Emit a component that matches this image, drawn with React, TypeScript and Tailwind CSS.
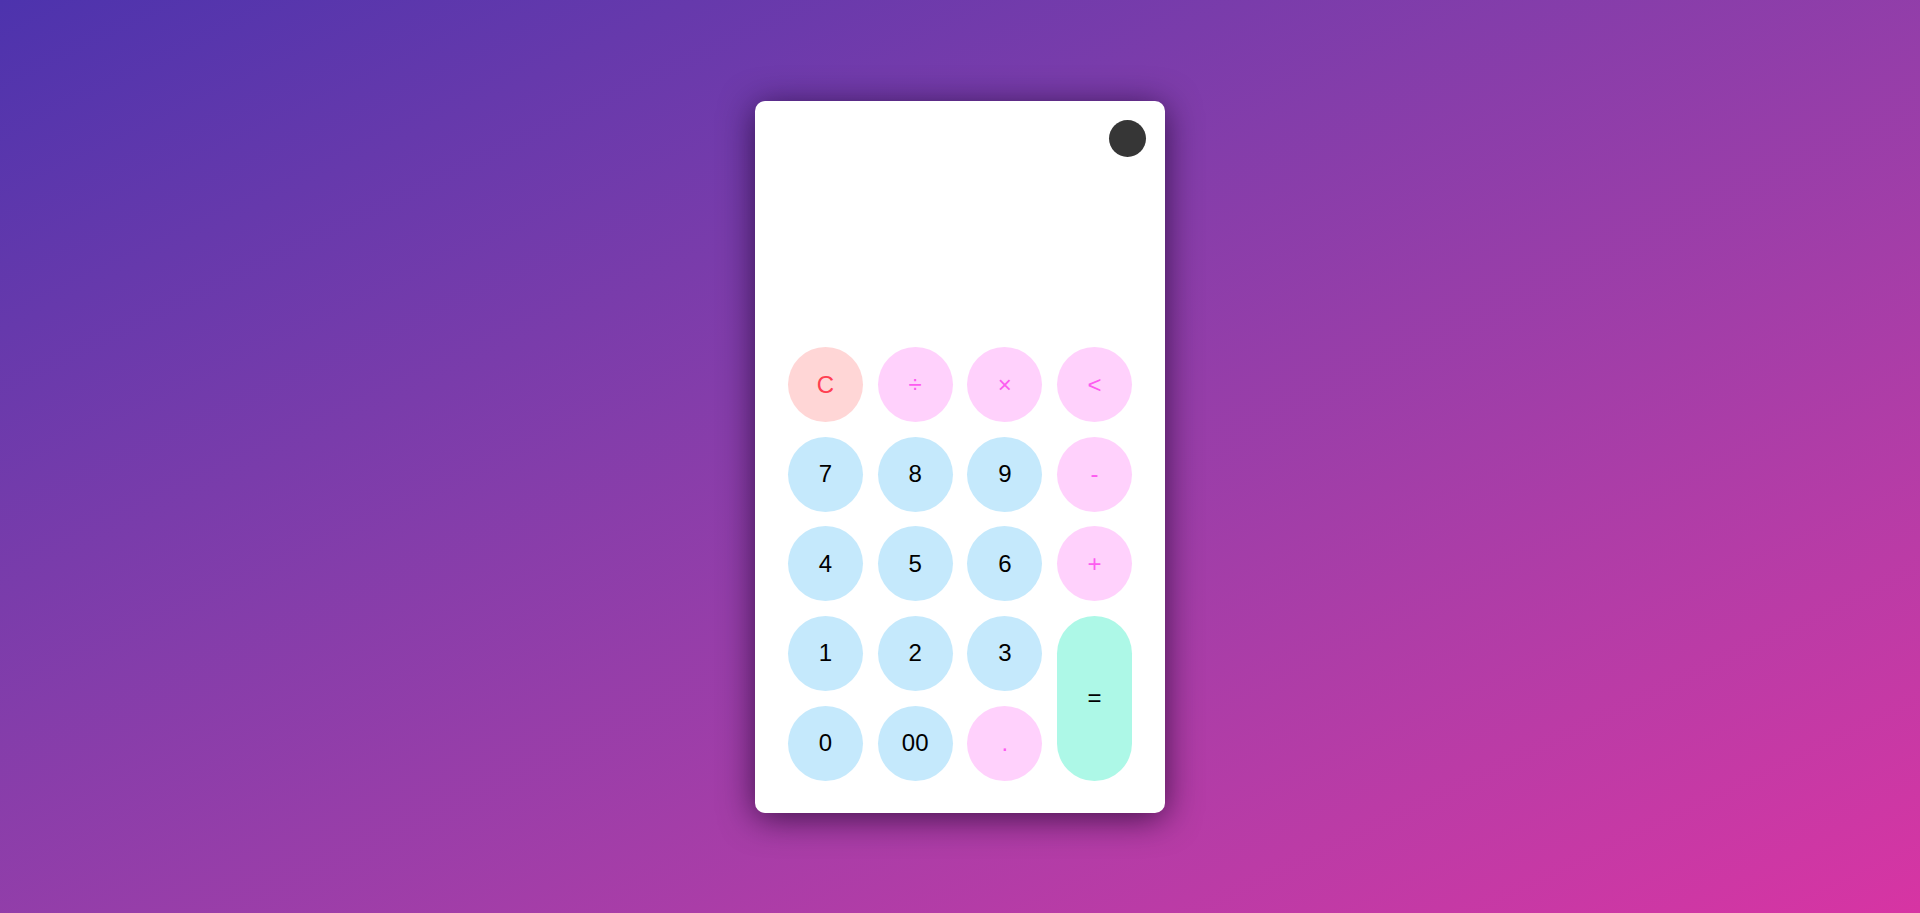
import React from 'react'

type Key = { label: string; kind: 'clear' | 'op' | 'num' | 'eq' }

const keys: Key[] = [
  { label: 'C', kind: 'clear' },
  { label: '÷', kind: 'op' },
  { label: '×', kind: 'op' },
  { label: '<', kind: 'op' },
  { label: '7', kind: 'num' },
  { label: '8', kind: 'num' },
  { label: '9', kind: 'num' },
  { label: '-', kind: 'op' },
  { label: '4', kind: 'num' },
  { label: '5', kind: 'num' },
  { label: '6', kind: 'num' },
  { label: '+', kind: 'op' },
  { label: '1', kind: 'num' },
  { label: '2', kind: 'num' },
  { label: '3', kind: 'num' },
  { label: '=', kind: 'eq' },
  { label: '0', kind: 'num' },
  { label: '00', kind: 'num' },
  { label: '.', kind: 'op' },
]

const styles: Record<Key['kind'], string> = {
  clear: 'bg-[#ffd6d6] text-[#ff4052] rounded-full',
  op: 'bg-[#ffd1fc] text-[#fd5cf0] rounded-full',
  num: 'bg-[#c5e9fc] text-black rounded-full',
  eq: 'bg-[#adf8e7] text-black rounded-[38px] row-span-2',
}

export default function App() {
  return (
    <div className="min-h-screen w-full flex items-center justify-center bg-linear-to-br from-[#4d33ad] to-[#d734a3] font-['Liberation_Sans',Arial,sans-serif]">
      <div className="w-[410px] h-[712px] bg-white rounded-[10px] shadow-[0_5px_34px_rgba(20,0,35,0.7)] flex flex-col">
        {/* theme toggle */}
        <div className="flex justify-end pt-[19px] pr-[19px]">
          <button className="w-[37px] h-[37px] rounded-full bg-[#363636]" aria-label="theme" />
        </div>

        {/* display */}
        <div className="flex-1" />

        <div className="grid grid-cols-[repeat(4,75px)] auto-rows-[75px] gap-x-[14.67px] gap-y-[14.6px] px-[33px] pb-[32px]">
          {keys.map((k) => (
            <button
              key={k.label}
              className={`flex items-center justify-center text-[24px] leading-none ${styles[k.kind]}`}
            >
              {k.label}
            </button>
          ))}
        </div>
      </div>
    </div>
  )
}
